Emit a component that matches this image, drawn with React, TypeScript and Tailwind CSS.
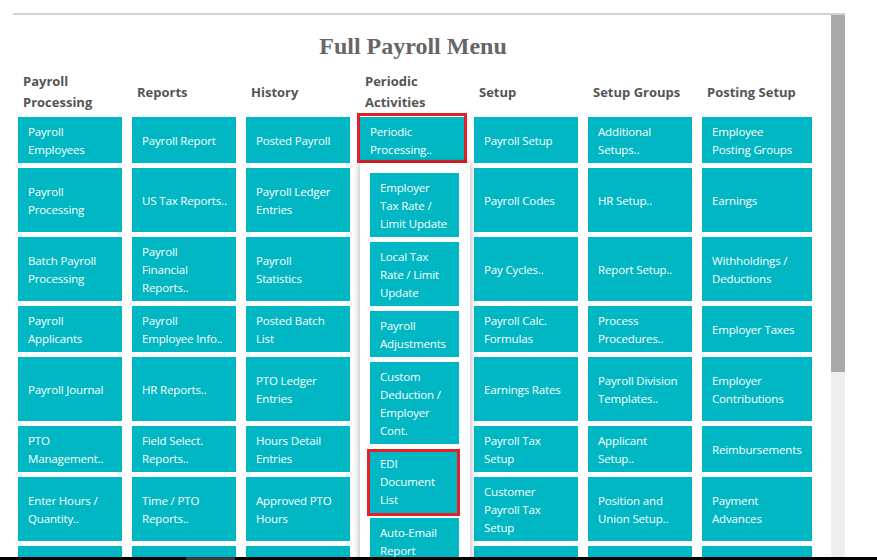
import React from "react";

// Tile labels are stored line by line so each tile breaks exactly where it should.
type Lines = string[];

const HEADERS: Lines[] = [
  ["Payroll", "Processing"],
  ["Reports"],
  ["History"],
  ["Periodic", "Activities"],
  ["Setup"],
  ["Setup Groups"],
  ["Posting Setup"],
];

// rows x columns; column 4 below the first row sits under the open dropdown
const ROWS: Lines[][] = [
  [["Payroll", "Employees"], ["Payroll Report"], ["Posted Payroll"], ["Periodic", "Processing.."], ["Payroll Setup"], ["Additional", "Setups.."], ["Employee", "Posting Groups"]],
  [["Payroll", "Processing"], ["US Tax Reports.."], ["Payroll Ledger", "Entries"], [], ["Payroll Codes"], ["HR Setup.."], ["Earnings"]],
  [["Batch Payroll", "Processing"], ["Payroll", "Financial", "Reports.."], ["Payroll", "Statistics"], [], ["Pay Cycles.."], ["Report Setup.."], ["Withholdings /", "Deductions"]],
  [["Payroll", "Applicants"], ["Payroll", "Employee Info.."], ["Posted Batch", "List"], [], ["Payroll Calc.", "Formulas"], ["Process", "Procedures.."], ["Employer Taxes"]],
  [["Payroll Journal"], ["HR Reports.."], ["PTO Ledger", "Entries"], [], ["Earnings Rates"], ["Payroll Division", "Templates.."], ["Employer", "Contributions"]],
  [["PTO", "Management.."], ["Field Select.", "Reports.."], ["Hours Detail", "Entries"], [], ["Payroll Tax", "Setup"], ["Applicant", "Setup.."], ["Reimbursements"]],
  [["Enter Hours /", "Quantity.."], ["Time / PTO", "Reports.."], ["Approved PTO", "Hours"], [], ["Customer", "Payroll Tax", "Setup"], ["Position and", "Union Setup.."], ["Payment", "Advances"]],
  [["Earn Class", "Setup..", ""], ["Labor Costing", "Reports..", ""], [], [], [], ["Labor Costing", "Setup..", ""], []],
];

const PERIODIC_ITEMS: { lines: Lines; h: string; marked?: boolean }[] = [
  { lines: ["Employer", "Tax Rate /", "Limit Update"], h: "h-[64px]" },
  { lines: ["Local Tax", "Rate / Limit", "Update"], h: "h-[64px]" },
  { lines: ["Payroll", "Adjustments"], h: "h-[46px]" },
  { lines: ["Custom", "Deduction /", "Employer", "Cont."], h: "h-[82px]" },
  { lines: ["EDI", "Document", "List"], h: "h-[64px]", marked: true },
  { lines: ["Auto-Email", "Report", "Setup"], h: "h-[64px]" },
];

function Tile({ lines, className = "" }: { lines: Lines; className?: string }) {
  return (
    <div className={`flex flex-col justify-center pl-[10px] pt-[2px] bg-[#00b7c3] text-white text-[11.5px] tracking-[-0.15px] leading-[18px] whitespace-nowrap ${className}`}>
      {lines.map((l, i) => (
        <span key={i}>{l || "\u00a0"}</span>
      ))}
    </div>
  );
}

function PeriodicCell({ lines }: { lines: Lines }) {
  return (
    <div className="relative z-10">
      <Tile lines={lines} className="h-full" />
      <div className="absolute -left-[3px] -top-[4px] -right-[3px] bottom-0 border-[3px] border-[#e4202a]" />
      <div className="absolute left-0 top-full w-[110px] h-[440px] bg-white shadow-[0_0_7px_rgba(0,0,0,0.35)] pt-[10px] pl-[10px] flex flex-col gap-[5px]">
        {PERIODIC_ITEMS.map((it, i) => (
          <div key={i} className="relative w-[89px]">
            <Tile lines={it.lines} className={it.h} />
            {it.marked && (
              <div className="absolute -left-[3px] top-0 -right-[1px] -bottom-[3px] border-[3px] border-[#e4202a]" />
            )}
          </div>
        ))}
      </div>
    </div>
  );
}

export default function App() {
  return (
    <div className="w-[877px] h-[560px] bg-white flex flex-col overflow-hidden font-['Open_Sans',sans-serif]">
      <div className="flex-1 min-h-0 pt-[13px] pl-[13px]">
        <div className="w-[832px] h-full border-t-2 border-[#d0d3d6] flex">
          <div className="flex-1 min-w-0 overflow-hidden">
            <h1 className="pt-[17px] mb-[10px] pr-[18px] text-center font-['Liberation_Serif',serif] font-bold text-[24px] leading-[28px] text-[#666]">
              Full Payroll Menu
            </h1>
            <div className="grid grid-cols-[104px_104px_104px_104px_104px_104px_110px] grid-rows-[42px_46px_64px_64px_46px_64px_46px_64px_64px] gap-x-[10px] gap-y-[5px] pl-[5px]">
              {HEADERS.map((lines, i) => (
                <div key={i} className="flex flex-col justify-center pl-[5px] pt-[2px] font-bold text-[13px] leading-[21px] text-[#555] whitespace-nowrap">
                  {lines.map((l) => (
                    <span key={l}>{l}</span>
                  ))}
                </div>
              ))}
              {ROWS.map((cells, r) =>
                cells.map((lines, c) =>
                  r === 0 && c === 3 ? (
                    <PeriodicCell key={`${r}-${c}`} lines={lines} />
                  ) : (
                    <Tile key={`${r}-${c}`} lines={lines} />
                  )
                )
              )}
            </div>
          </div>
          {/* vertical scrollbar */}
          <div className="w-[14px] flex flex-col bg-[#eeeeee]">
            <div className="h-[357px] bg-[#a9a9a9]" />
          </div>
        </div>
      </div>
      <div className="h-[3px] bg-black flex">
        <div className="ml-[186px] w-[49px] bg-[#3a3a3a]" />
      </div>
    </div>
  );
}
